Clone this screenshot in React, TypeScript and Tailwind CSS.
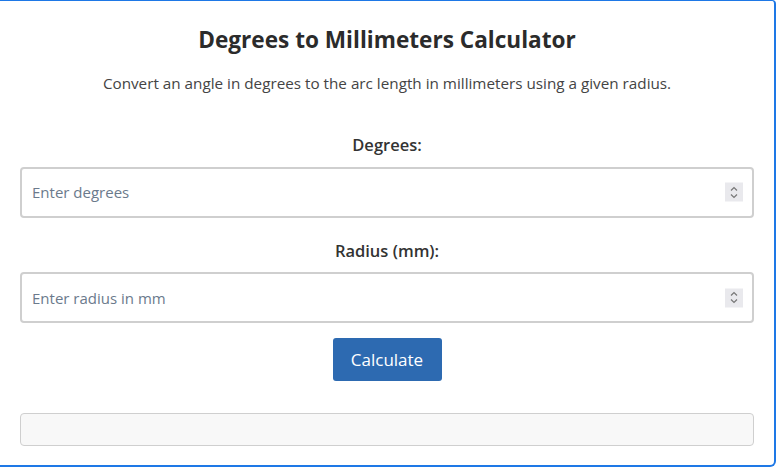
import React from "react";

function Spinner() {
  return (
    <div className="pointer-events-none absolute right-[11px] top-1/2 flex h-[19px] w-[18px] -translate-y-1/2 items-center justify-center bg-[#e9e9ed]">
      <svg width="10" height="14" viewBox="0 0 10 14" fill="none" stroke="#777" strokeWidth="1.2">
        <path d="M2 5 L5 2 L8 5" />
        <path d="M2 9 L5 12 L8 9" />
      </svg>
    </div>
  );
}

function Field({ label, placeholder }: { label: string; placeholder: string }) {
  return (
    <div className="flex flex-col items-center">
      <label className="text-[16.5px] font-semibold text-[#333] leading-none">{label}</label>
      <div className="relative mt-[13px] w-full">
        <input
          type="text"
          placeholder={placeholder}
          className="h-[51px] w-full rounded-[4px] border-2 border-[#cfcfcf] bg-white px-[10px] text-[15px] text-[#333] outline-none placeholder:text-[#6b7a8c]"
        />
        <Spinner />
      </div>
    </div>
  );
}

export default function App() {
  return (
    <div
      className="h-[467px] w-[776px] overflow-hidden bg-white"
      style={{ fontFamily: '"Open Sans", "Noto Sans", sans-serif' }}
    >
      <div className="flex h-[467px] w-[776px] flex-col rounded-br-[6px] rounded-tr-[4px] border-b-2 border-r-2 border-t border-[#1e78e6] px-[20px]">
        <h1 className="mt-[26px] text-center text-[22.6px] font-bold leading-[26px] text-[#2b2b2b]">
          Degrees to Millimeters Calculator
        </h1>
        <p className="mt-[20px] text-center text-[15.25px] leading-[20px] text-[#444]">
          Convert an angle in degrees to the arc length in millimeters using a given radius.
        </p>
        <div className="mt-[44px]">
          <Field label="Degrees:" placeholder="Enter degrees" />
        </div>
        <div className="mt-[25px]">
          <Field label="Radius (mm):" placeholder="Enter radius in mm" />
        </div>
        <div className="mt-[15px] flex justify-center">
          <button className="h-[43px] w-[109px] rounded-[3px] bg-[#2d6ab1] text-[17px] text-white">
            Calculate
          </button>
        </div>
        <div className="mt-[32px] h-[33px] w-full rounded-[4px] border border-[#cfcfcf] bg-[#f8f8f8]" />
      </div>
    </div>
  );
}
